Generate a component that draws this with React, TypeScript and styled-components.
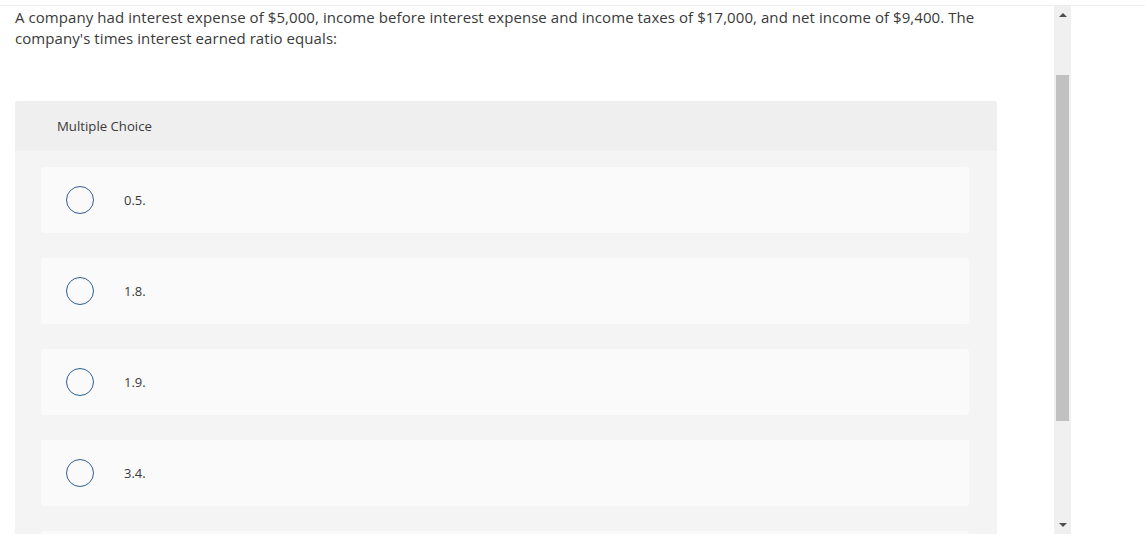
import React from 'react';
import styled, { createGlobalStyle } from 'styled-components';

const GlobalStyle = createGlobalStyle`
	html, body {
		margin: 0;
		padding: 0;
		background: #fff;
	}
	body {
		font-family: 'Open Sans', 'Liberation Sans', sans-serif;
		color: #333;
	}
`;

// Styles
const Page = styled.div`
	width: 1145px;
	height: 548px;
	padding-top: 5px;
	box-sizing: border-box;
	overflow: hidden;
`;

const Frame = styled.div`
	display: flex;
	height: 528px;
	border-top: 1px solid #ededed;
`;

const Content = styled.div`
	width: 1054px;
	flex: none;
	overflow: hidden;
	padding: 1px 57px 0 15px;
	box-sizing: border-box;
`;

const Question = styled.p`
	margin: 0;
	font-size: 15px;
	letter-spacing: 0.07px;
	line-height: 21px;
	color: #3a3a3a;
	white-space: nowrap;
`;

const Panel = styled.div`
	margin-top: 52px;
	width: 982px;
	border-radius: 3px 3px 0 0;
	background: #f4f4f4;
	padding-bottom: 20px;
`;

const PanelHeader = styled.div`
	height: 50px;
	display: flex;
	align-items: center;
	padding-left: 42px;
	background: #efefef;
	border-radius: 3px 3px 0 0;
	font-size: 13.2px;
	color: #3a3a3a;
`;

const Options = styled.ul`
	list-style: none;
	margin: 0;
	padding: 16px 28px 0 26px;
	display: flex;
	flex-direction: column;
	gap: 25px;
`;

const Option = styled.li`
	height: 66px;
	display: flex;
	align-items: center;
	padding-left: 25px;
	background: #fafafa;
	border-radius: 3px;
	font-size: 13px;
	color: #3a3a3a;
`;

const Radio = styled.span`
	width: 26px;
	height: 26px;
	border: 1.5px solid #2d5f92;
	border-radius: 50%;
	box-sizing: content-box;
	margin-right: 30px;
	flex: none;
`;

const Scrollbar = styled.div`
	width: 17px;
	flex: none;
	background: #f0f0f0;
	display: flex;
	flex-direction: column;
	align-items: center;
`;

const Arrow = styled.div<{ down?: boolean }>`
	width: 0;
	height: 0;
	border-left: 4px solid transparent;
	border-right: 4px solid transparent;
	${(p) =>
		p.down
			? 'border-top: 4px solid #505050; margin-top: auto; margin-bottom: 7px;'
			: 'border-bottom: 4px solid #505050; margin-top: 7px;'}
`;

const Thumb = styled.div`
	width: 13px;
	height: 346px;
	margin-top: 58px;
	background: #c1c1c1;
`;

const choices = ['0.5.', '1.8.', '1.9.', '3.4.'];

function App() {
	return (
		<Page>
			<GlobalStyle />
			<Frame>
				<Content>
					<Question>
						A company had interest expense of $5,000, income before interest expense and income taxes
						of $17,000, and net income of $9,400. The
						<br />
						company's times interest earned ratio equals:
					</Question>
					<Panel>
						<PanelHeader>Multiple Choice</PanelHeader>
						<Options>
							{choices.map((c) => (
								<Option key={c}>
									<Radio />
									{c}
								</Option>
							))}
							<Option />
						</Options>
					</Panel>
				</Content>
				<Scrollbar>
					<Arrow />
					<Thumb />
					<Arrow down />
				</Scrollbar>
			</Frame>
		</Page>
	);
}

export default App;
